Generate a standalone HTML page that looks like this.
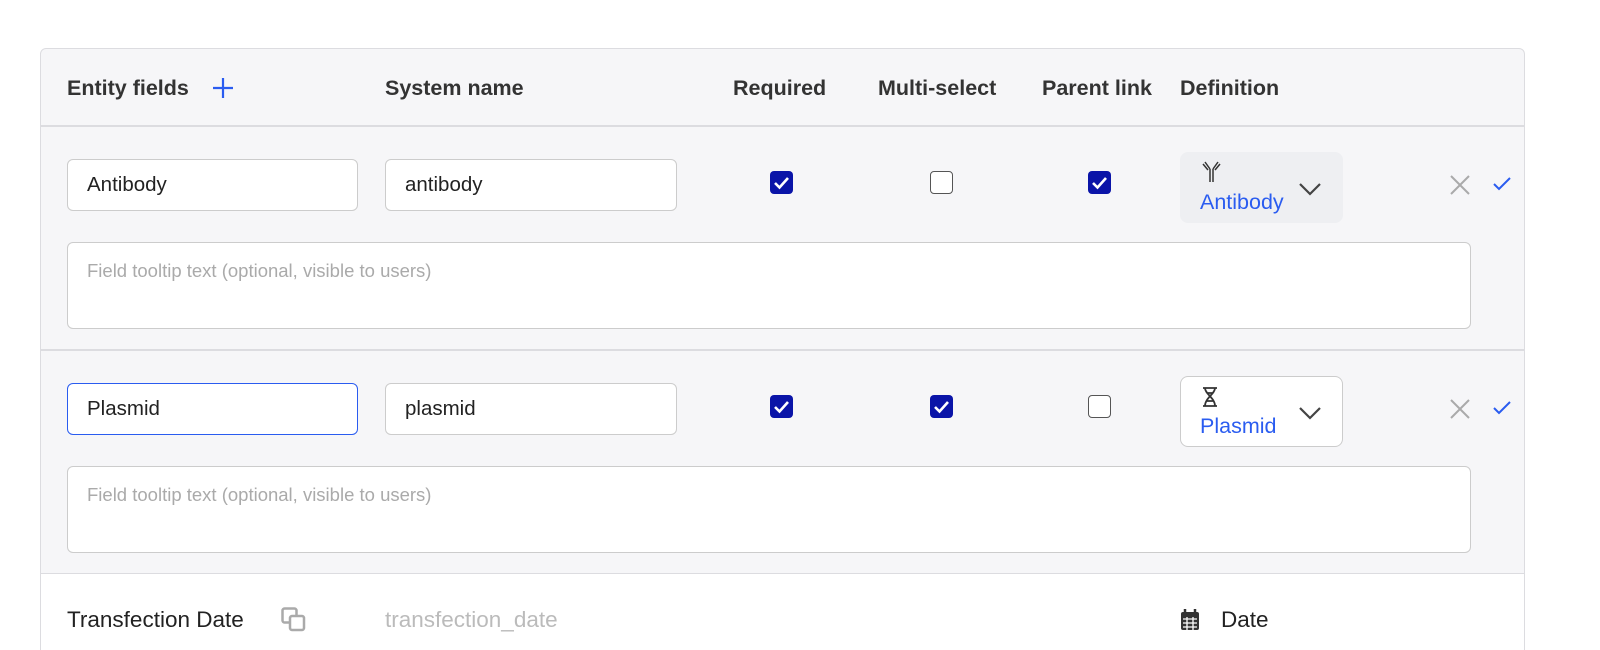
<!DOCTYPE html>
<html><head><style>
*{box-sizing:border-box;margin:0;padding:0}
html,body{width:1600px;height:650px;overflow:hidden}
body{background:#fff;font-family:"Liberation Sans",sans-serif;position:relative}
.card{position:absolute;left:40px;top:48px;width:1485px;height:620px;border:1px solid #dcdce0;border-radius:6px;background:#f6f6f8;overflow:hidden}
.a{position:absolute}
.h{font-size:21.5px;font-weight:bold;color:#333;top:76px}
.in{position:absolute;height:52px;background:#fff;border:1.5px solid #ccc;border-radius:6px;font-size:20.5px;color:#222;padding:0 0 0 19px;line-height:49px}
.cb{position:absolute;width:23px;height:23px;border-radius:4px}
.on{background:#0a14a8}
.off{border:1.5px solid #555;background:#fff}
.ta{position:absolute;left:67px;width:1404px;height:87px;background:#fff;border:1.5px solid #ccc;border-radius:6px;font-size:18.5px;color:#aaa;padding:17px 19px}
.def{position:absolute;left:1180px;width:163px;height:71px;border-radius:8px}
.def .t{position:absolute;left:20px;top:38px;font-size:21.5px;color:#2a5cf0}
.sep{position:absolute;left:40px;width:1485px;height:1.5px;background:#dcdce0}
</style></head><body>
<div class="card"></div>
<div class="sep" style="top:125px"></div>
<div class="sep" style="top:349px"></div>
<div class="sep" style="top:573px"></div>
<div class="a" style="left:41px;top:574px;width:1483px;height:80px;background:#fff"></div>
<div class="a h" style="left:67px">Entity fields</div>
<svg class="a" style="left:211px;top:76px" width="24" height="24"><path d="M12 2V22M2 12H22" stroke="#2a5cf0" stroke-width="2.2"/></svg>
<div class="a h" style="left:385px">System name</div>
<div class="a h" style="left:733px">Required</div>
<div class="a h" style="left:878px">Multi-select</div>
<div class="a h" style="left:1042px">Parent link</div>
<div class="a h" style="left:1180px">Definition</div>

<div class="in" style="left:67px;top:159px;width:291px">Antibody</div>
<div class="in" style="left:385px;top:159px;width:292px">antibody</div>
<svg class="cb on" style="left:770px;top:171px" viewBox="0 0 23 23"><path d="M5 12l4.5 4.5L18 7" stroke="#fff" stroke-width="2.6" fill="none"/></svg>
<div class="cb off" style="left:930px;top:171px"></div>
<svg class="cb on" style="left:1088px;top:171px" viewBox="0 0 23 23"><path d="M5 12l4.5 4.5L18 7" stroke="#fff" stroke-width="2.6" fill="none"/></svg>
<div class="def" style="top:152px;background:#eeeff2">
<svg class="a" style="left:22px;top:8px" width="20" height="22" viewBox="0 0 20 22"><path d="M8 9V22M11 9V22M8 9L3 2M11 9L16 2M6 10L1 4M13 10L18 4" stroke="#333" stroke-width="1.5" fill="none"/></svg>
<div class="t">Antibody</div>
<svg class="a" style="left:118px;top:30px" width="24" height="14"><path d="M2 2l10 10 10-10" stroke="#444" stroke-width="2.2" fill="none"/></svg>
</div>
<svg class="a" style="left:1449px;top:174px" width="22" height="22"><path d="M2 2L20 20M20 2L2 20" stroke="#aaa" stroke-width="2"/></svg>
<svg class="a" style="left:1492px;top:176px" width="20" height="16"><path d="M2 8l5 5L18 2" stroke="#2a5cf0" stroke-width="2" fill="none"/></svg>
<div class="ta" style="top:242px">Field tooltip text (optional, visible to users)</div>

<div class="in" style="left:67px;top:383px;width:291px;border-color:#2a5cf0">Plasmid</div>
<div class="in" style="left:385px;top:383px;width:292px">plasmid</div>
<svg class="cb on" style="left:770px;top:395px" viewBox="0 0 23 23"><path d="M5 12l4.5 4.5L18 7" stroke="#fff" stroke-width="2.6" fill="none"/></svg>
<svg class="cb on" style="left:930px;top:395px" viewBox="0 0 23 23"><path d="M5 12l4.5 4.5L18 7" stroke="#fff" stroke-width="2.6" fill="none"/></svg>
<div class="cb off" style="left:1088px;top:395px"></div>
<div class="def" style="top:376px;background:#fff;border:1.5px solid #ccc">
<svg class="a" style="left:20px;top:9px" width="18" height="22" viewBox="0 0 18 22"><path d="M2 2H16M2 20H16M4 2C4 8 14 12 14 20M14 2C14 8 4 12 4 20M6 7H12M6 15H12" stroke="#333" stroke-width="1.8" fill="none"/></svg>
<div class="t" style="left:19px;top:37px">Plasmid</div>
<svg class="a" style="left:117px;top:29px" width="24" height="14"><path d="M2 2l10 10 10-10" stroke="#444" stroke-width="2.2" fill="none"/></svg>
</div>
<svg class="a" style="left:1449px;top:398px" width="22" height="22"><path d="M2 2L20 20M20 2L2 20" stroke="#aaa" stroke-width="2"/></svg>
<svg class="a" style="left:1492px;top:400px" width="20" height="16"><path d="M2 8l5 5L18 2" stroke="#2a5cf0" stroke-width="2" fill="none"/></svg>
<div class="ta" style="top:466px">Field tooltip text (optional, visible to users)</div>

<div class="a" style="left:67px;top:607px;font-size:22.5px;color:#222">Transfection Date</div>
<svg class="a" style="left:281px;top:607px" width="26" height="26"><rect x="1.5" y="1.5" width="14" height="14" rx="2" fill="none" stroke="#aaa" stroke-width="2.5"/><rect x="9" y="9" width="14" height="14" rx="2" fill="#fff" stroke="#aaa" stroke-width="2.5"/></svg>
<div class="a" style="left:385px;top:607px;font-size:22.5px;color:#bbb">transfection_date</div>
<svg class="a" style="left:1180px;top:609px" width="20" height="22" viewBox="0 0 20 22"><rect x="1" y="3" width="18" height="18" rx="2" fill="#333"/><path d="M5 0V5M15 0V5" stroke="#333" stroke-width="2.5"/><path d="M3 10H17M3 14H17M3 18H17M7 8V21M13 8V21" stroke="#fff" stroke-width="1.3"/></svg>
<div class="a" style="left:1221px;top:607px;font-size:22.5px;color:#222">Date</div>
</body></html>
